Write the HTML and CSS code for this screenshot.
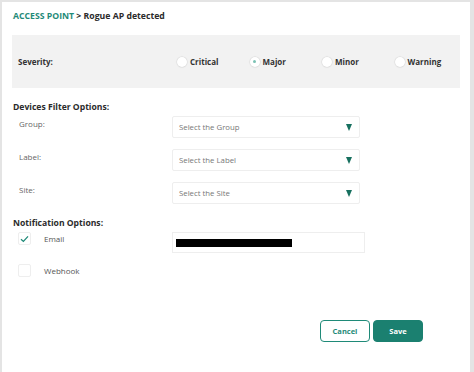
FILE: index.html
```html
<!DOCTYPE html>
<html lang="en">
<head>
    <meta charset="UTF-8">
    <title>Rogue AP detected</title>
    <link rel="stylesheet" href="styles.css">
</head>
<body>
    <div class="panel">
        <h1 class="title"><span class="crumb">ACCESS POINT</span> &gt; Rogue AP detected</h1>

        <div class="severity-box">
            <span class="severity-label">Severity:</span>
            <label class="radio"><span class="dot"></span>Critical</label>
            <label class="radio"><span class="dot checked"></span>Major</label>
            <label class="radio"><span class="dot"></span>Minor</label>
            <label class="radio"><span class="dot"></span>Warning</label>
        </div>

        <h2 class="section">Devices Filter Options:</h2>
        <div class="field-row">
            <span class="field-label">Group:</span>
            <div class="select">Select the Group<span class="arrow"></span></div>
        </div>
        <div class="field-row">
            <span class="field-label">Label:</span>
            <div class="select">Select the Label<span class="arrow"></span></div>
        </div>
        <div class="field-row">
            <span class="field-label">Site:</span>
            <div class="select">Select the Site<span class="arrow"></span></div>
        </div>

        <h2 class="section notify">Notification Options:</h2>
        <div class="check-row">
            <span class="checkbox">
                <svg width="9" height="8" viewBox="0 0 9 8"><path d="M1 4.2 L3.4 6.4 L8 1.4" fill="none" stroke="#1f8a78" stroke-width="1.3"/></svg>
            </span>
            <span class="check-label">Email</span>
            <div class="text-input"><span class="redacted"></span></div>
        </div>
        <div class="check-row">
            <span class="checkbox"></span>
            <span class="check-label">Webhook</span>
        </div>

        <div class="actions">
            <button class="btn btn-outline">Cancel</button>
            <button class="btn btn-fill">Save</button>
        </div>
    </div>
</body>
</html>
```

FILE: styles.css
```css
body {
    margin: 0;
    background-color: #e4e4e4;
    font-family: "Open Sans", "Liberation Sans", sans-serif;
    color: #333;
}
.panel {
    background-color: #fff;
    margin: 2px 4px 0 2px;
    height: 370px;
    padding: 8px 10px 0 11px;
    box-sizing: border-box;
}
.title {
    margin: 0;
    font-size: 8.7px;
    line-height: 13px;
    font-weight: bold;
    color: #2b2b2b;
}
.crumb {
    color: #1f8a78;
}
.severity-box {
    display: flex;
    align-items: center;
    height: 53px;
    margin: 12px 0 0 -1px;
    padding-left: 6px;
    background-color: #f2f2f2;
    font-size: 8px;
    font-weight: bold;
}
.severity-label {
    flex: none;
    width: 159px;
}
.radio {
    flex: none;
    display: flex;
    align-items: center;
    width: 72.5px;
    gap: 3px;
}
.radio:last-child {
    width: auto;
}
.dot {
    width: 10px;
    height: 10px;
    border-radius: 50%;
    background-color: #fff;
    box-shadow: 0 0 1px 0.5px rgba(0,0,0,0.12);
    display: flex;
    align-items: center;
    justify-content: center;
}
.dot.checked::after {
    content: "";
    width: 3px;
    height: 3px;
    border-radius: 50%;
    background-color: #7cc2b4;
}
.section {
    margin: 13px 0 2px;
    font-size: 8.6px;
    line-height: 13px;
    font-weight: bold;
    color: #2b2b2b;
}
.section.notify {
    margin-top: 13px;
    margin-bottom: 2px;
}
.field-row {
    display: flex;
    align-items: flex-start;
    height: 22px;
    margin-bottom: 11px;
}
.field-label {
    width: 153px;
    padding: 2px 0 0 6px;
    font-size: 8px;
    color: #666;
}
.select {
    display: flex;
    align-items: center;
    justify-content: space-between;
    width: 188px;
    height: 22px;
    padding: 0 7px 0 6px;
    box-sizing: border-box;
    border: 1px solid #eee;
    border-radius: 2px;
    font-size: 7.8px;
    color: #777;
}
.arrow {
    width: 0;
    height: 0;
    border-left: 3.5px solid transparent;
    border-right: 3.5px solid transparent;
    border-top: 7px solid #17705f;
}
.check-row {
    display: flex;
    align-items: flex-start;
    height: 32px;
}
.checkbox {
    width: 13px;
    height: 13px;
    margin: 0 0 0 5px;
    box-sizing: border-box;
    border: 1px solid #eee;
    border-radius: 2px;
    display: flex;
    align-items: center;
    justify-content: center;
}
.check-label {
    width: 128px;
    padding: 1px 0 0 13px;
    font-size: 8px;
    color: #555;
}
.text-input {
    width: 193px;
    height: 21px;
    box-sizing: border-box;
    border: 1px solid #eee;
    display: flex;
    align-items: center;
    padding-left: 3px;
}
.redacted {
    width: 116px;
    height: 8px;
    background-color: #000;
}
.actions {
    display: flex;
    justify-content: flex-end;
    gap: 3px;
    margin: 24px 37px 0 0;
}
.btn {
    width: 50px;
    height: 22px;
    border-radius: 4px;
    font-family: inherit;
    font-size: 7.5px;
    font-weight: bold;
    cursor: pointer;
}
.btn-outline {
    background-color: #fff;
    border: 1px solid #1f8a78;
    color: #1f8a78;
}
.btn-fill {
    background-color: #1b8070;
    border: 1px solid #1b8070;
    color: #fff;
}
```
